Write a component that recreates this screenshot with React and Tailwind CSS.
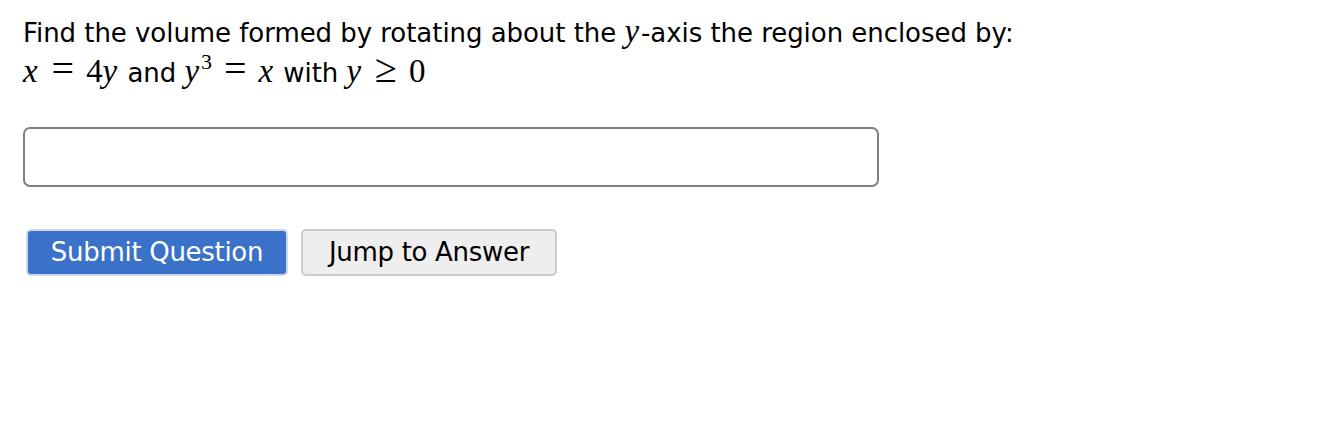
import React from 'react';

const serif = { fontFamily: '"Liberation Serif", "DejaVu Serif", serif' };

const M = ({ children }) => (
  <span className="italic text-[33px] leading-none pr-[2px]" style={serif}>{children}</span>
);
const R = ({ children }) => (
  <span className="text-[33px] leading-none" style={serif}>{children}</span>
);
const Rel = ({ children }) => (
  <span className="text-[40px] leading-[0] mx-[12px]" style={serif}>{children}</span>
);

export default function App() {
  return (
    <div className="bg-white min-h-[446px] w-[1328px] pl-[23px] pt-[13px] text-black" style={{ fontFamily: '"DejaVu Sans", Verdana, sans-serif' }}>
      <div className="text-[26px] leading-[40px] tracking-[-0.05px]">
        <div>
          Find the volume formed by rotating about the <M>y</M>-axis the region enclosed by:
        </div>
        <div className="h-[40px]">
          <M>x</M><Rel>=</Rel><R>4</R><M>y</M> and <M>y</M>
          <sup className="text-[22px] -top-[0.6em]" style={serif}>3</sup>
          <Rel>=</Rel><M>x</M> with <M>y</M><Rel>≥</Rel><R>0</R>
        </div>
      </div>
      <input
        type="text"
        className="mt-[34px] block w-[856px] h-[60px] border-2 border-[#808080] rounded-[7px] bg-white outline-none px-3"
      />
      <div className="mt-[42px] flex gap-[13px] pl-[3px]">
        <button className="w-[262px] h-[47px] rounded-[5px] bg-[#3a72c9] border-2 border-[#cfd8e6] text-white text-[26px] tracking-[-0.3px]">
          Submit Question
        </button>
        <button className="w-[256px] h-[47px] rounded-[5px] bg-[#eeeeee] border-2 border-[#cccccc] text-black text-[26px] tracking-[-0.3px]">
          Jump to Answer
        </button>
      </div>
    </div>
  );
}
